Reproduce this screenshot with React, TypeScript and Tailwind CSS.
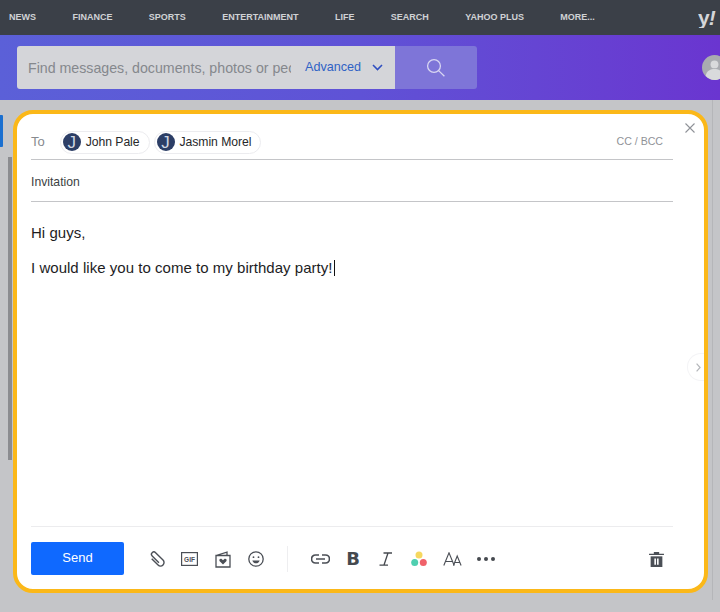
import React from "react";

const NAV = ["NEWS", "FINANCE", "SPORTS", "ENTERTAINMENT", "LIFE", "SEARCH", "YAHOO PLUS", "MORE..."];

function Chip({ name }: { name: string }) {
  return (
    <div className="flex h-[23px] items-center gap-[5px] rounded-full border border-[#ececef] pl-[2px] pr-[9px]">
      <div className="flex h-[18px] w-[18px] items-center justify-center rounded-full bg-[#2c3e66] text-[17px] font-light leading-none text-[#cfd6e2]">J</div>
      <span className="text-[12.2px] leading-none tracking-[-0.05px] text-[#26282a]">{name}</span>
    </div>
  );
}

const ic = "#4b4f56";

export default function App() {
  return (
    <div className="flex h-[612px] w-[720px] flex-col overflow-hidden bg-[#c4c5c8] font-['Liberation_Sans',Arial,sans-serif]">
      <div className="flex h-[35px] shrink-0 items-center justify-between bg-[#3b4048] pl-[9px]">
        <div className="flex gap-[36.4px] text-[9px] font-bold text-[#d0d2d5]">
          {NAV.map((n) => (
            <span key={n}>{n}</span>
          ))}
        </div>
        <div className="flex w-[22px] items-center overflow-hidden whitespace-nowrap text-[21px] font-bold leading-none tracking-[-1px] text-[#d5d6d9]">
          <span>y</span>
          <span className="italic">!</span>
        </div>
      </div>

      <div className="flex h-[65px] shrink-0 items-center justify-between bg-gradient-to-r from-[#5b60d8] via-[#5f52d6] to-[#6a35d0] pl-[17px]">
        <div className="flex h-[43px] w-[460px] overflow-hidden rounded-[3px]">
          <div className="flex w-[378px] items-center bg-[#d4d5d9] pl-[11px]">
            <input
              readOnly
              placeholder="Find messages, documents, photos or people"
              className="mt-[2px] w-[263px] bg-transparent text-[14.2px] outline-none placeholder:text-[#85888d]"
            />
            <span className="ml-[14px] text-[12.6px] text-[#2f62c5]">Advanced</span>
            <svg className="ml-[11px]" width="11" height="7" viewBox="0 0 11 7" fill="none" stroke="#2f4fc0" strokeWidth="1.6">
              <path d="M1 1l4.500 4.500L10 1" />
            </svg>
          </div>
          <div className="flex flex-1 items-center justify-center bg-[#7e75d8]">
            <svg width="20" height="20" viewBox="0 0 20 20" fill="none" stroke="#d9d7f2" strokeWidth="1.3">
              <circle cx="8" cy="8" r="6.400" />
              <path d="M12.600 12.600l5.800 5.600" />
            </svg>
          </div>
        </div>
        <svg className="-mr-[7px]" width="25" height="25" viewBox="0 0 24 24">
          <circle cx="12" cy="12" r="12" fill="#a9abb0" />
          <circle cx="12" cy="9" r="3.800" fill="#d9dadc" />
          <path d="M3.500 20c1-5 5-6.500 8.500-6.500s7.500 1.500 8.500 6.500c-2 2.500-5 4-8.500 4s-6.500-1.500-8.500-4z" fill="#d9dadc" />
        </svg>
      </div>

      <div className="relative flex-1 bg-[#c4c5c8] px-[13px] pt-[10px]">
        <div className="absolute left-0 top-[15px] h-[32px] w-[3px] rounded-r-[1px] bg-[#1a6fd0]" />
        <div className="absolute left-[8px] top-[57px] h-[303px] w-[4px] bg-[#8b8c90]" />
        <div className="absolute left-[712px] top-0 h-[500px] w-px bg-[#b5b6b9]" />

        <div className="relative flex h-[483px] w-[695px] flex-col rounded-[20px] border-[4px] border-[#fbb819] bg-white pl-[14px] pr-[31px]">
          <svg className="absolute right-[9px] top-[9px]" width="10" height="10" viewBox="0 0 10 10" fill="none" stroke="#8f9298" strokeWidth="1.1">
            <path d="M.5.5l9 9M9.500.5l-9 9" />
          </svg>

          <div className="flex h-[46px] shrink-0 items-center border-b border-[#c4c5c8] pt-[11px]">
            <span className="mr-[15px] text-[13px] text-[#878a8f]">To</span>
            <div className="flex gap-[4px]">
              <Chip name="John Pale" />
              <Chip name="Jasmin Morel" />
            </div>
            <span className="ml-auto mr-[10px] text-[10.6px] text-[#8f9297]">CC / BCC</span>
          </div>

          <div className="flex h-[42px] shrink-0 items-center border-b border-[#c4c5c8] pt-[3px] text-[12.2px] text-[#3c3f43]">Invitation</div>

          <div className="flex-1 pt-[22px] text-[15px] leading-[18px] tracking-[0.03px] text-[#1d1d1f]">
            <p>Hi guys,</p>
            <p className="mt-[17px]">
              I would like you to come to my birthday party!
              <span className="ml-px inline-block h-[16px] w-px bg-[#111] align-[-3px]" />
            </p>
          </div>

          <div className="flex h-[63px] shrink-0 items-center border-t border-[#ececee] pt-[2px]">
            <button className="-mt-[2px] h-[33px] w-[93px] rounded-[2px] bg-[#0f69ff] text-[13px] text-white">Send</button>

            <svg className="ml-[24px]" width="18" height="18" viewBox="0 0 18 18" fill="none" stroke={ic} strokeWidth="1.400">
              <path transform="rotate(-45 9 9)" d="M5.500 5v9a3.500 3.500 0 007 0V3.500a2.400 2.400 0 00-4.800 0V13" />
            </svg>
            <svg className="ml-[15px]" width="17" height="14" viewBox="0 0 17 14">
              <rect x=".6" y=".6" width="15.800" height="12.800" fill="none" stroke={ic} strokeWidth="1.200" />
              <text x="8.500" y="9.500" textAnchor="middle" fontSize="6.500" fontWeight="700" fill={ic} fontFamily="Liberation Sans">GIF</text>
            </svg>
            <svg className="ml-[17px]" width="16" height="17" viewBox="0 0 16 17">
              <path d="M1 4.500h14V16H1zM1 4.500L12 1.200v3" fill="none" stroke={ic} strokeWidth="1.300" />
              <path d="M8 13.500L4.700 10.300c-1.300-1.500.8-3.300 2.200-2L8 9.200l1.100-.9c1.400-1.300 3.500.5 2.200 2z" fill={ic} />
            </svg>
            <svg className="ml-[17px]" width="16" height="16" viewBox="0 0 16 16" fill="none" stroke={ic} strokeWidth="1.300">
              <circle cx="8" cy="8" r="7.200" />
              <circle cx="5.500" cy="6.200" r=".9" fill={ic} stroke="none" />
              <circle cx="10.500" cy="6.200" r=".9" fill={ic} stroke="none" />
              <path d="M4.300 9.500h7.400C11 11.500 9.500 12.300 8 12.300S5 11.500 4.300 9.500z" fill={ic} stroke="none" />
            </svg>

            <div className="ml-[23px] mr-[23px] h-[26px] w-px bg-[#eeeef0]" />

            <svg width="19" height="10" viewBox="0 0 19 10" fill="none" stroke={ic} strokeWidth="1.700">
              <path d="M8 1H4.500a4 4 0 000 8H8M11 1h3.500a4 4 0 010 8H11M5 5h9" />
            </svg>
            <span className="ml-[16px] flex w-[14px] justify-center font-['DejaVu_Sans',sans-serif] text-[18px] font-bold leading-none text-[#45494f]">B</span>
            <svg className="ml-[19px]" width="14" height="14" viewBox="0 0 14 14" fill="none" stroke="#45494f" strokeWidth="1.300">
              <path d="M4.500 1H13M9 1L5 13M.5 13.200h8.500" />
            </svg>
            <svg className="ml-[18px]" width="16" height="16" viewBox="0 0 16 16">
              <circle cx="8" cy="4" r="3.500" fill="#f6d860" />
              <circle cx="3.700" cy="11.500" r="3.500" fill="#4fcfb0" />
              <circle cx="12.300" cy="11.500" r="3.500" fill="#f0626a" />
            </svg>
            <svg className="ml-[16px]" width="19" height="14" viewBox="0 0 19 14" fill="none" stroke={ic} strokeWidth="1.100">
              <path d="M.8 13.500L6 .8l5.200 12.700M2.500 9.500h7" />
              <path d="M10.500 13.500L14.200 4l3.900 9.500M11.800 10.500h5" />
            </svg>
            <div className="ml-[15px] flex gap-[3px]">
              <i className="h-[4px] w-[4px] rounded-full bg-[#45494f]" />
              <i className="h-[4px] w-[4px] rounded-full bg-[#45494f]" />
              <i className="h-[4px] w-[4px] rounded-full bg-[#45494f]" />
            </div>

            <svg className="ml-auto mr-[9px]" width="15" height="16" viewBox="0 0 14 15">
              <path d="M0 2.500h14v1.300H0zM4.500 1h5v1.500h-5z" fill={ic} />
              <path d="M1.500 5h11v10h-11z" fill={ic} />
              <path d="M5 7h1.500v6H5zM7.500 7H9v6H7.500z" fill="#fff" />
            </svg>
          </div>

          <div className="absolute right-0 top-[239px] flex h-[28px] w-[17px] items-center rounded-l-full border border-r-0 border-[#f4f4f6] bg-white pl-[8px]">
            <svg width="5" height="9" viewBox="0 0 5 9" fill="none" stroke="#b4b6ba" strokeWidth="1.200">
              <path d="M.6.6l3.500 3.900L.6 8.400" />
            </svg>
          </div>
        </div>
      </div>
    </div>
  );
}
